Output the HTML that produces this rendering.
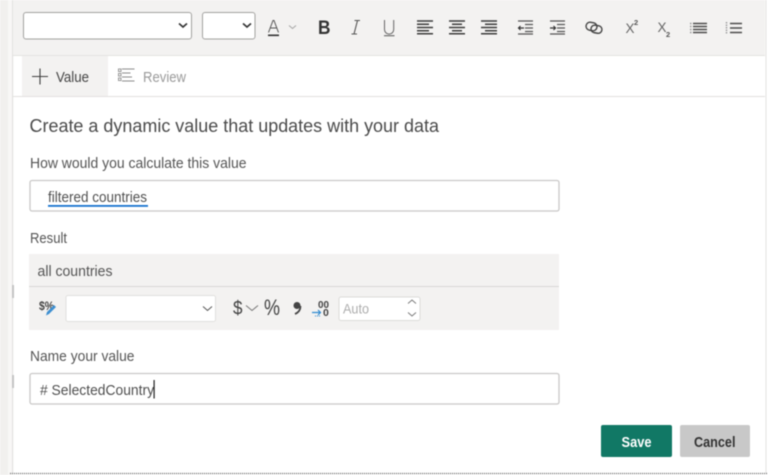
<!DOCTYPE html>
<html><head><meta charset="utf-8"><style>
html,body{margin:0;padding:0;width:768px;height:475px;overflow:hidden;background:#fff}
svg{display:block;filter:blur(.45px)}
text{font-family:"Liberation Sans",sans-serif;fill:#484644;font-size:14px}
</style></head><body>
<svg width="768" height="475" viewBox="0 0 768 475" xmlns="http://www.w3.org/2000/svg">
<rect width="768" height="475" fill="#fff"/>
<rect x="0" y="0" width="8" height="475" fill="#f1f0ee"/>
<rect x="8" y="0" width="5" height="475" fill="#f8f7f6"/>
<rect x="12" y="0" width="1.2" height="473" fill="#e3e2e0"/>
<rect x="765.5" y="0" width="1" height="473" fill="#e3e2e0"/>
<rect x="12" y="285" width="2" height="13" fill="#c4c4c4"/>
<rect x="12" y="375" width="2" height="13" fill="#c4c4c4"/>
<line x1="10" y1="473.5" x2="768" y2="473.5" stroke="#666" stroke-width="1.2" stroke-dasharray="1 1"/>

<!-- toolbar -->
<rect x="13" y="0" width="752" height="55" fill="#f3f2f1"/>
<rect x="13" y="55" width="752" height="1" fill="#e4e3e1"/>
<rect x="23.5" y="12.5" width="168" height="26.5" rx="2.5" fill="#fff" stroke="#a3a2a0"/>
<path d="M179 23.5l4 3.5 4-3.5" fill="none" stroke="#333" stroke-width="1.6"/>
<rect x="202.5" y="12.5" width="52.5" height="26.5" rx="2.5" fill="#fff" stroke="#a3a2a0"/>
<path d="M243 23.5l4 3.5 4-3.5" fill="none" stroke="#333" stroke-width="1.6"/>

<!-- A -->
<path d="M268.5 32.500L273 20.500h1L278.500 32.500M270.500 28h6" fill="none" stroke="#555" stroke-width="1"/>
<rect x="268" y="34.500" width="11" height="1.600" fill="#333"/>
<path d="M289 25.500l3.500 3 3.500-3" fill="none" stroke="#a5a5a5" stroke-width="1"/>
<!-- B I U -->
<text x="318" y="34" textLength="12.500" lengthAdjust="spacingAndGlyphs" style="font-size:19.500px;font-weight:700;fill:#333">B</text>
<path d="M354.500 20.500h5.500M351.500 34h5.500M357.500 20.500L354 34" fill="none" stroke="#555" stroke-width="1.100"/>
<path d="M384.500 20v9.500a4.600 4.600 0 0 0 9.200 0V20" fill="none" stroke="#666" stroke-width="1"/>
<rect x="384" y="35.200" width="10.500" height="1" fill="#555"/>
<!-- align -->
<g stroke="#3c3c3c" stroke-width="1.500">
<path d="M417 21h16M417 24.200h12M417 27.500h16M417 30.700h12M417 33.800h16"/>
<path d="M449 21h16M452 24.200h10M449 27.500h16M452 30.700h10M449 33.800h16"/>
<path d="M481 21h16M485 24.200h12M481 27.500h16M485 30.700h12M481 33.800h16"/>
</g>
<!-- indent -->
<g fill="none" stroke="#555" stroke-width="1.200">
<path d="M518 21h15M525 24.500h8M525 28h8M525 31.500h8M518 34h15" />
<path d="M524 28h-5.500M520.500 26l-2 2 2 2" stroke="#333"/>
<path d="M550 21h15M557 24.500h8M557 28h8M557 31.500h8M550 34h15"/>
<path d="M550 28h5.500M553.500 26l2 2-2 2" stroke="#333"/>
</g>
<!-- link -->
<g fill="none" stroke="#444" stroke-width="1.400">
<rect x="586" y="22.500" width="11" height="8" rx="4" transform="rotate(10 591.500 26.500)"/>
<rect x="591" y="25.500" width="11" height="7.500" rx="3.700" transform="rotate(10 596.500 29)"/>
</g>
<!-- x2 -->
<text x="625.500" y="33" style="font-size:14px;fill:#666" textLength="9" lengthAdjust="spacingAndGlyphs">X</text>
<text x="634" y="25" style="font-size:7.500px;font-weight:700;fill:#555">2</text>
<text x="657.500" y="32" style="font-size:14px;fill:#666" textLength="9" lengthAdjust="spacingAndGlyphs">X</text>
<text x="666" y="37" style="font-size:7.500px;font-weight:700;fill:#555">2</text>
<!-- lists -->
<g stroke="#4c4c4c" stroke-width="1.400">
<path d="M693 23.500h14M693 26.500h14M693 29.500h14M693 32.500h14"/>
<path d="M690 23.500h1.500M690 26.500h1.500M690 29.500h1.500M690 32.500h1.500" stroke="#999"/>
<path d="M730 23.500h12M730 28h12M730 32.500h12"/>
<path d="M726.500 22v11.500" stroke="#999" stroke-dasharray="1.500 1"/>
</g>

<!-- tabs -->
<rect x="22" y="56" width="86" height="40" fill="#f3f2f1"/>
<rect x="13" y="96" width="752" height="1" fill="#e2e1df"/>
<path d="M32 76.500h16M40 68.500v16" stroke="#3f3f3f" stroke-width="1.100" fill="none"/>
<text x="56" y="82" textLength="33" lengthAdjust="spacingAndGlyphs" style="font-size:15px;fill:#444">Value</text>
<g stroke="#8a8a8a" stroke-width="1" fill="none">
<path d="M122 69h12.500M122 73h8.500M122 77h10M122 81h12.500"/>
<path d="M118.500 69h2.500v2.500h-2.500zM118.500 73.500h2.500v2.500h-2.500zM118.500 78h2.500v2.500h-2.500z" stroke="#999"/>
</g>
<text x="143" y="82" textLength="43" lengthAdjust="spacingAndGlyphs" style="font-size:15px;fill:#9a9a9a">Review</text>

<!-- content -->
<text x="29.500" y="132" textLength="409.500" lengthAdjust="spacingAndGlyphs" style="font-size:18px;fill:#4a4a4a">Create a dynamic value that updates with your data</text>
<text x="30" y="168" textLength="216.500" lengthAdjust="spacingAndGlyphs" style="font-size:15px;fill:#555">How would you calculate this value</text>

<rect x="30" y="180.500" width="529" height="30.500" rx="2" fill="#fff" stroke="#c9c8c7" stroke-width="1.300"/>
<text x="48" y="202" textLength="99" lengthAdjust="spacingAndGlyphs" style="font-size:15px;fill:#505050">filtered countries</text>
<rect x="48" y="205" width="100" height="1.800" fill="#1773cf"/>

<text x="30" y="243" textLength="37" lengthAdjust="spacingAndGlyphs" style="font-size:15px;fill:#555">Result</text>

<rect x="29" y="254" width="530" height="76" fill="#f3f2f1"/>
<rect x="29" y="286" width="530" height="1" fill="#d8d7d5"/>
<text x="37.500" y="276" textLength="75" lengthAdjust="spacingAndGlyphs" style="font-size:15px;fill:#555">all countries</text>

<text x="39" y="310" textLength="15" lengthAdjust="spacingAndGlyphs" style="font-size:11.500px;font-weight:700;fill:#444">$%</text>
<path d="M46 315.500l1-3.500 7-7 2 2-7 7z" fill="#3e8fd1"/>
<rect x="66" y="295.500" width="149.500" height="26" rx="2" fill="#fff" stroke="#e1e0de"/>
<path d="M203 306.500l4.500 4 4.500-4" fill="none" stroke="#555" stroke-width="1"/>

<text x="233" y="314.500" textLength="9.500" lengthAdjust="spacingAndGlyphs" style="font-size:19px;fill:#444">$</text>
<path d="M246 305.500l6 5 6-5" fill="none" stroke="#777" stroke-width="1"/>
<text x="264" y="315" textLength="16" lengthAdjust="spacingAndGlyphs" style="font-size:22px;fill:#444">%</text>
<circle cx="297" cy="305.500" r="3.500" fill="#444"/>
<path d="M300.500 306c0 4-2 6.500-5.500 8" fill="none" stroke="#444" stroke-width="1.800"/>
<text x="318" y="308" textLength="11" lengthAdjust="spacingAndGlyphs" style="font-size:10.500px;font-weight:700;fill:#444">00</text>
<text x="323" y="316" style="font-size:10.500px;font-weight:700;fill:#444">0</text>
<path d="M312 312.500h8.500M318 310l2.500 2.500-2.500 2.500" fill="none" stroke="#2f8ad0" stroke-width="1.200"/>
<path d="M315 316h5" stroke="#2f8ad0" stroke-width="1" stroke-dasharray="1 1"/>
<rect x="339" y="297" width="81" height="23.500" rx="2" fill="#fff" stroke="#dcdbd9"/>
<text x="343" y="313.500" textLength="26" lengthAdjust="spacingAndGlyphs" style="font-size:14px;fill:#adadad">Auto</text>
<path d="M408 303.500l4-3.500 4 3.500M408 312.500l4 3.500 4-3.500" fill="none" stroke="#777" stroke-width=".9"/>

<text x="30" y="361" textLength="104.500" lengthAdjust="spacingAndGlyphs" style="font-size:15px;fill:#555">Name your value</text>
<rect x="30" y="373.500" width="529" height="30.500" rx="2" fill="#fff" stroke="#c9c8c7" stroke-width="1.300"/>
<text x="40" y="395" textLength="114" lengthAdjust="spacingAndGlyphs" style="font-size:15px;fill:#505050"># SelectedCountry</text>
<rect x="153.500" y="380" width="1.200" height="18.500" fill="#222"/>

<rect x="601" y="425" width="71" height="32" rx="2" fill="#117865"/>
<text x="621.500" y="447" textLength="30" lengthAdjust="spacingAndGlyphs" style="font-size:15px;font-weight:700;fill:#fff">Save</text>
<rect x="680" y="425" width="70" height="32" rx="2" fill="#c8c8c8"/>
<text x="694" y="447" textLength="41.500" lengthAdjust="spacingAndGlyphs" style="font-size:15px;font-weight:700;fill:#333">Cancel</text>
</svg>
</body></html>
